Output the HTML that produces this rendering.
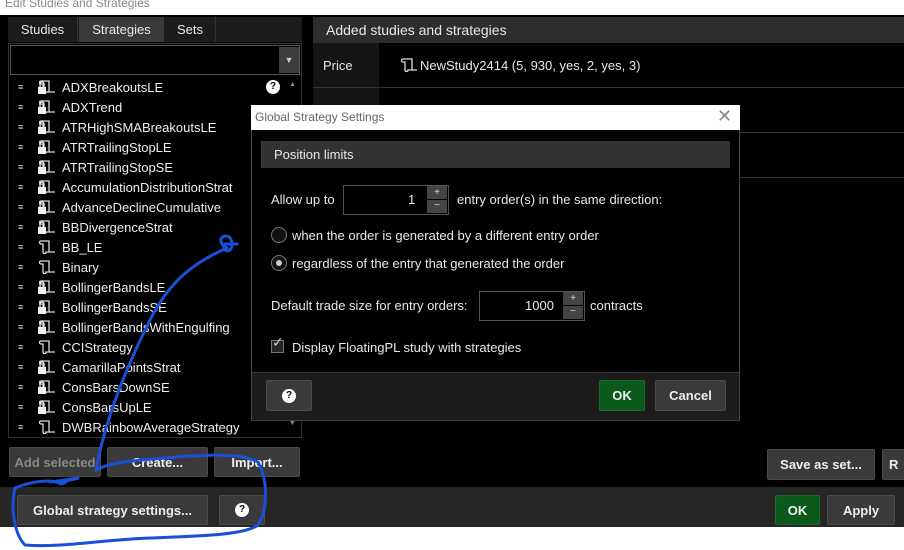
<!DOCTYPE html>
<html><head><meta charset="utf-8"><style>
*{box-sizing:border-box;margin:0;padding:0}
body{width:904px;height:550px;background:#fff;position:relative;overflow:hidden;font-family:"Liberation Sans",sans-serif;font-size:13px;color:#e8e8e8}
.a{position:absolute}
.btn{position:absolute;background:#3a3a3a;border:1px solid #4a4a4a;border-radius:2px;color:#eee;font-weight:bold;font-size:13px;display:flex;align-items:center;justify-content:center}
.row{position:absolute;left:18px;height:20px;display:flex;align-items:center;font-size:13px;color:#eee}
.row .m{width:8px;font-size:9px;color:#ddd;margin-right:10px;line-height:6px}
.row svg{margin-right:4px}
.rad{position:absolute;width:16px;height:16px;border-radius:50%;border:1px solid #777;background:#111}
</style></head><body>
<div class="a" style="left:5px;top:-4px;color:#888;font-size:12px">Edit Studies and Strategies</div>
<div class="a" style="left:0;top:15px;width:904px;height:512px;background:#000"></div>
<div class="a" style="left:8px;top:17px;width:294px;height:25px;background:#1c1c1c"></div>
<div class="a" style="left:8px;top:17px;width:70px;height:25px;background:#1c1c1c;border-right:1px solid #333;display:flex;align-items:center;justify-content:center">Studies</div>
<div class="a" style="left:79px;top:17px;width:85px;height:25px;background:#3a3a3a;display:flex;align-items:center;justify-content:center">Strategies</div>
<div class="a" style="left:165px;top:17px;width:51px;height:25px;background:#1c1c1c;border-right:1px solid #333;display:flex;align-items:center;justify-content:center">Sets</div>
<div class="a" style="left:8px;top:43px;width:294px;height:395px;border:1px solid #333"></div>
<div class="a" style="left:10px;top:45px;width:290px;height:30px;border:1px solid #555;background:#000"></div>
<div class="a" style="left:279px;top:47px;width:20px;height:26px;background:#3d3d3d;color:#ccc;font-size:9px;display:flex;align-items:center;justify-content:center">▼</div>
<div class="a" style="left:266px;top:80px;width:14px;height:14px;border-radius:50%;background:#fff;color:#000;font-weight:bold;font-size:10px;text-align:center;line-height:14px">?</div>
<div class="a" style="left:289px;top:81px;color:#888;font-size:7px">▲</div>
<div class="a" style="left:289px;top:420px;color:#888;font-size:7px">▼</div>
<div id="list"></div>
<div class="btn" style="left:9px;top:447px;width:92px;height:30px;color:#888">Add selected</div>
<div class="btn" style="left:107px;top:447px;width:101px;height:30px">Create...</div>
<div class="btn" style="left:214px;top:447px;width:86px;height:30px">Import...</div>
<div class="btn" style="left:767px;top:449px;width:108px;height:31px">Save as set...</div>
<div class="btn" style="left:882px;top:449px;width:30px;height:31px;justify-content:flex-start;padding-left:6px">R</div>
<div class="a" style="left:313px;top:17px;width:591px;height:26px;background:#2d2d2d;padding:5px 0 0 13px;font-size:14px">Added studies and strategies</div>
<div class="a" style="left:313px;top:43px;width:66px;height:45px;background:#141414;padding:15px 0 0 10px">Price</div>
<div class="a" style="left:313px;top:87px;width:591px;height:1px;background:#333"></div>
<div class="a" style="left:313px;top:132px;width:591px;height:1px;background:#333"></div>
<div class="a" style="left:313px;top:177px;width:591px;height:1px;background:#333"></div>
<div class="a" style="left:313px;top:88px;width:66px;height:89px;background:#141414"></div>
<div class="a" style="left:400px;top:57px;display:flex;align-items:center;font-size:13px"><svg width="20" height="16" viewBox="0 0 20 16"><path d="M3 2h9v11M3 2c-2 0-2 3 0 3h2v8c0 2 3 2 3 0h9" fill="none" stroke="#ddd" stroke-width="1.3"/></svg>NewStudy2414 (5, 930, yes, 2, yes, 3)</div>
<div class="a" style="left:0;top:487px;width:904px;height:40px;background:#262626"></div>
<div class="btn" style="left:17px;top:495px;width:191px;height:30px">Global strategy settings...</div>
<div class="btn" style="left:219px;top:495px;width:46px;height:30px"><span style="width:14px;height:14px;border-radius:50%;background:#fff;color:#000;font-size:10px;text-align:center;line-height:14px">?</span></div>
<div class="btn" style="left:775px;top:495px;width:45px;height:30px;background:#0b5a1c;border-color:#1b6a2c">OK</div>
<div class="btn" style="left:827px;top:495px;width:68px;height:30px">Apply</div>
<div class="a" style="left:251px;top:105px;width:489px;height:316px;background:#000;border:1px solid #444"></div>
<div class="a" style="left:251px;top:105px;width:489px;height:25px;background:#fff;color:#666;font-size:12px;padding:5px 0 0 4px">Global Strategy Settings</div>
<div class="a" style="left:717px;top:106px;color:#888;font-size:18px">✕</div>
<div class="a" style="left:261px;top:141px;width:469px;height:27px;background:#333;padding:6px 0 0 13px">Position limits</div>
<div class="a" style="left:271px;top:192px">Allow up to</div>
<div class="a" style="left:343px;top:185px;width:106px;height:30px;border:1px solid #555;background:#000"></div>
<div class="a" style="left:408px;top:192px">1</div>
<div class="a" style="left:427px;top:186px;width:20px;height:13px;background:#444;color:#ddd;font-size:10px;text-align:center;line-height:13px">+</div>
<div class="a" style="left:427px;top:200px;width:20px;height:13px;background:#444;color:#ddd;font-size:10px;text-align:center;line-height:11px">−</div>
<div class="a" style="left:457px;top:192px">entry order(s) in the same direction:</div>
<div class="rad" style="left:271px;top:227px"></div>
<div class="a" style="left:292px;top:228px">when the order is generated by a different entry order</div>
<div class="rad" style="left:271px;top:255px"></div>
<div class="a" style="left:276px;top:260px;width:6px;height:6px;border-radius:50%;background:#ccc"></div>
<div class="a" style="left:292px;top:256px">regardless of the entry that generated the order</div>
<div class="a" style="left:271px;top:298px">Default trade size for entry orders:</div>
<div class="a" style="left:479px;top:291px;width:106px;height:30px;border:1px solid #555;background:#000"></div>
<div class="a" style="left:525px;top:298px">1000</div>
<div class="a" style="left:563px;top:292px;width:20px;height:13px;background:#444;color:#ddd;font-size:10px;text-align:center;line-height:13px">+</div>
<div class="a" style="left:563px;top:306px;width:20px;height:13px;background:#444;color:#ddd;font-size:10px;text-align:center;line-height:11px">−</div>
<div class="a" style="left:590px;top:298px">contracts</div>
<div class="a" style="left:271px;top:340px;width:13px;height:13px;border:1px solid #777;background:#222"></div>
<div class="a" style="left:272px;top:334px;color:#ccc;font-size:14px">✓</div>
<div class="a" style="left:292px;top:340px">Display FloatingPL study with strategies</div>
<div class="a" style="left:252px;top:372px;width:487px;height:48px;background:#1c1c1c;border-top:1px solid #3a3a3a"></div>
<div class="btn" style="left:266px;top:380px;width:46px;height:31px"><span style="width:14px;height:14px;border-radius:50%;background:#fff;color:#000;font-size:10px;text-align:center;line-height:14px">?</span></div>
<div class="btn" style="left:599px;top:380px;width:46px;height:31px;background:#0b5a1c;border-color:#1b6a2c">OK</div>
<div class="btn" style="left:655px;top:380px;width:71px;height:31px">Cancel</div>
<svg class="a" style="left:0;top:0" width="904" height="550"><g fill="none" stroke="#1a4fd8" stroke-width="3" stroke-linecap="round" stroke-linejoin="round">
<path d="M96 470 C105 420 125 370 150 320 C170 280 195 262 227 248"/>
<path d="M227 248 c-8-4-8-12 -1-12 c6 0 8 10 4 14 c-4 3 -8-2 -5-6 l12 0"/>
<path d="M55 482 C65 478 72 482 60 484"/>
<path d="M62 484 C50 478 30 482 15 488 C10 510 15 535 25 545 C60 548 100 540 150 538 C200 536 245 535 258 525 C268 510 268 480 258 462 C240 452 200 455 165 458 C140 460 110 462 96 470"/>
<path d="M50 482 C80 478 90 476 60 482"/>
</g></svg>
<script>
var L=[["ADXBreakoutsLE",1],["ADXTrend",1],["ATRHighSMABreakoutsLE",1],["ATRTrailingStopLE",1],["ATRTrailingStopSE",1],["AccumulationDistributionStrat",1],["AdvanceDeclineCumulative",1],["BBDivergenceStrat",1],["BB_LE",0],["Binary",0],["BollingerBandsLE",1],["BollingerBandsSE",1],["BollingerBandsWithEngulfing",1],["CCIStrategy",0],["CamarillaPointsStrat",1],["ConsBarsDownSE",1],["ConsBarsUpLE",1],["DWBRainbowAverageStrategy",0]];
var h="";L.forEach(function(r,i){var ic='<svg width="22" height="16" viewBox="0 0 22 16"><path d="M5 2h8v11M5 2c-2 0-2 3 0 3h2v8c0 2 3 2 3 0h9" fill="none" stroke="#ddd" stroke-width="1.3"/>'+(r[1]?'<rect x="2" y="8" width="8" height="7" fill="#eee"/><path d="M4 8V5a2 2 0 0 1 4 0v3" fill="none" stroke="#eee" stroke-width="1.3"/>':'')+'</svg>';
h+='<div class="row" style="top:'+(77+i*20)+'px"><span class="m">≡</span>'+ic+r[0]+'</div>';});
document.getElementById("list").innerHTML=h;
</script>
</body></html>
